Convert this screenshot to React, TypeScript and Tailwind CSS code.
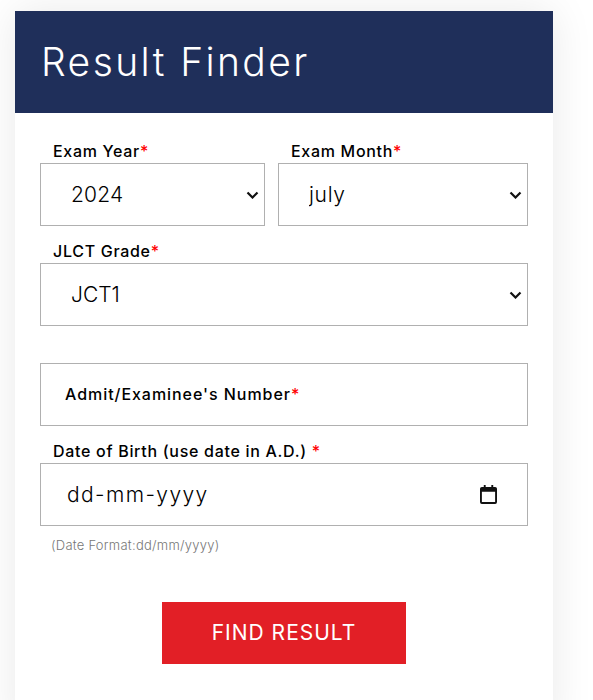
function SelectField({ value, options, spacing }: { value: string; options: string[]; spacing: string }) {
  return (
    <div className="relative">
      <select
        defaultValue={value}
        className={`h-[63px] w-full appearance-none border border-[#b0b0b0] bg-white pl-[30px] text-[21px] font-light text-black ${spacing}`}
      >
        {options.map((o) => (
          <option key={o}>{o}</option>
        ))}
      </select>
      <svg
        className="pointer-events-none absolute top-[28px] right-[6px]"
        width="13"
        height="8"
        viewBox="0 0 13 8"
        aria-hidden="true"
      >
        <path d="M1.5 1.5l5 5 5-5" fill="none" stroke="#111" strokeWidth="2.2" />
      </svg>
    </div>
  )
}

export default function App() {
  return (
    <div className="h-[700px] overflow-hidden bg-white pt-[11px] pl-[15px] font-['Inter','Open_Sans',sans-serif]">
      <div className="h-[720px] w-[538px] bg-white shadow-[0_0_40px_rgba(0,0,0,0.09)]">
        <div className="flex h-[102px] items-center bg-[#1f2f5a] pl-[26px]">
          <h1 className="-mt-[2px] text-[39px] leading-none font-light tracking-[2.4px] text-white">Result Finder</h1>
        </div>

        <form className="px-[25px] pt-[30px]">
          <div className="grid grid-cols-[225px_250px] gap-x-[13px]">
            <div>
              <label className="block h-[20px] pl-[13px] text-[16px] leading-[16px] font-medium tracking-[0.7px] text-black">
                Exam Year<span className="text-[#ff0000]">*</span>
              </label>
              <SelectField value="2024" options={['2024', '2023']} spacing="tracking-[0.2px]" />
            </div>
            <div>
              <label className="block h-[20px] pl-[13px] text-[16px] leading-[16px] font-medium tracking-[0.7px] text-black">
                Exam Month<span className="text-[#ff0000]">*</span>
              </label>
              <SelectField value="july" options={['june', 'july']} spacing="tracking-[0.7px]" />
            </div>
          </div>

          <div className="mt-[17px] w-[488px]">
            <label className="block h-[20px] pl-[13px] text-[16px] leading-[16px] font-medium tracking-[0.7px] text-black">
              JLCT Grade<span className="text-[#ff0000]">*</span>
            </label>
            <SelectField value="JCT1" options={['JCT1', 'JCT2']} spacing="tracking-normal" />
          </div>

          <div className="mt-[37px] flex h-[63px] w-[488px] items-center border border-[#b0b0b0] pb-[2px] pl-[24px] text-[16px] font-medium tracking-[0.95px] text-black">
            Admit/Examinee's Number<span className="text-[#ff0000]">*</span>
          </div>

          <div className="mt-[17px] w-[488px]">
            <label className="block h-[20px] pl-[13px] text-[16px] leading-[16px] font-medium tracking-[0.7px] text-black">
              Date of Birth (use date in A.D.) <span className="text-[#ff0000]">*</span>
            </label>
            <div className="flex h-[63px] items-center justify-between border border-[#b0b0b0] pr-[30px] pl-[26px]">
              <span className="text-[21px] font-light tracking-[1.4px] text-black">dd-mm-yyyy</span>
              <svg width="17" height="19" viewBox="0 0 18 20" aria-hidden="true">
                <path d="M4 0h2v2h6V0h2v2h2a2 2 0 0 1 2 2v14a2 2 0 0 1-2 2H2a2 2 0 0 1-2-2V4a2 2 0 0 1 2-2h2z M2 7v11h14V7z" fill="#111" fillRule="evenodd" />
              </svg>
            </div>
          </div>

          <p className="mt-[10px] pl-[11px] text-[13px] leading-[18px] font-light tracking-[0.25px] text-[#777]">(Date Format:dd/mm/yyyy)</p>

          <button type="button" className="mt-[48px] ml-[122px] h-[62px] w-[244px] bg-[#e21f26] text-[21px] font-normal tracking-[1px] text-white">
            FIND RESULT
          </button>
        </form>
      </div>
    </div>
  )
}
